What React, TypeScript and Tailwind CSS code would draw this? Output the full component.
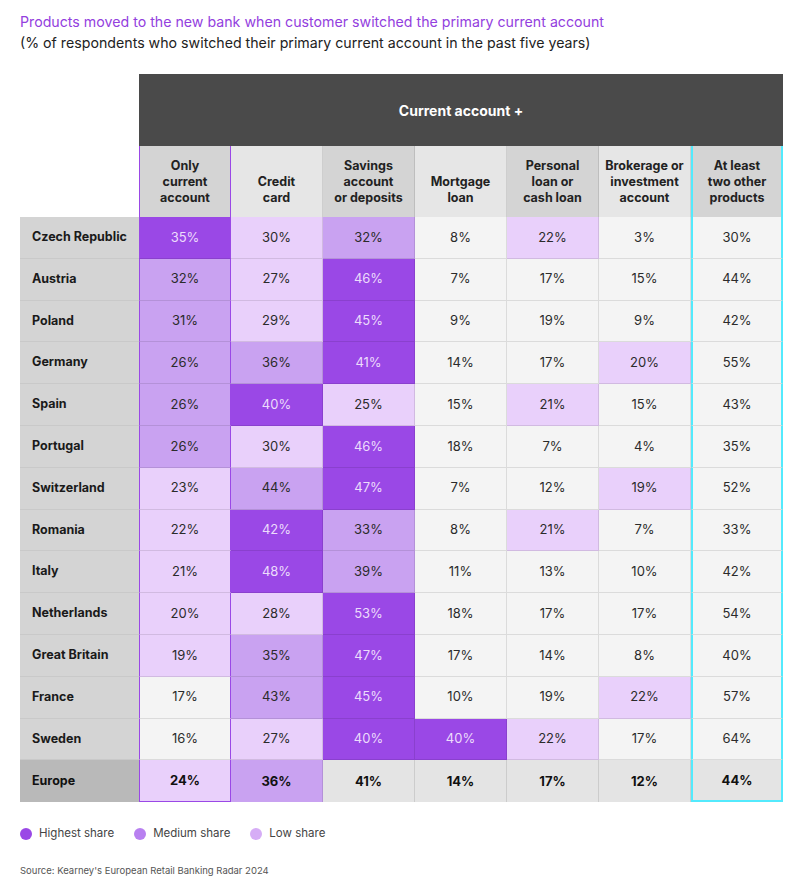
import React from 'react';

type Level = 'H' | 'M' | 'L' | 'N';

interface Row {
    country: string;
    values: [number, Level][];
}

const columns = [
    ['Only', 'current', 'account'],
    ['Credit', 'card'],
    ['Savings', 'account', 'or deposits'],
    ['Mortgage', 'loan'],
    ['Personal', 'loan or', 'cash loan'],
    ['Brokerage or', 'investment', 'account'],
    ['At least', 'two other', 'products'],
];

const rows: Row[] = [
    { country: 'Czech Republic', values: [[35, 'H'], [30, 'L'], [32, 'M'], [8, 'N'], [22, 'L'], [3, 'N'], [30, 'N']] },
    { country: 'Austria', values: [[32, 'M'], [27, 'L'], [46, 'H'], [7, 'N'], [17, 'N'], [15, 'N'], [44, 'N']] },
    { country: 'Poland', values: [[31, 'M'], [29, 'L'], [45, 'H'], [9, 'N'], [19, 'N'], [9, 'N'], [42, 'N']] },
    { country: 'Germany', values: [[26, 'M'], [36, 'M'], [41, 'H'], [14, 'N'], [17, 'N'], [20, 'L'], [55, 'N']] },
    { country: 'Spain', values: [[26, 'M'], [40, 'H'], [25, 'L'], [15, 'N'], [21, 'L'], [15, 'N'], [43, 'N']] },
    { country: 'Portugal', values: [[26, 'M'], [30, 'L'], [46, 'H'], [18, 'N'], [7, 'N'], [4, 'N'], [35, 'N']] },
    { country: 'Switzerland', values: [[23, 'L'], [44, 'M'], [47, 'H'], [7, 'N'], [12, 'N'], [19, 'L'], [52, 'N']] },
    { country: 'Romania', values: [[22, 'L'], [42, 'H'], [33, 'M'], [8, 'N'], [21, 'L'], [7, 'N'], [33, 'N']] },
    { country: 'Italy', values: [[21, 'L'], [48, 'H'], [39, 'M'], [11, 'N'], [13, 'N'], [10, 'N'], [42, 'N']] },
    { country: 'Netherlands', values: [[20, 'L'], [28, 'L'], [53, 'H'], [18, 'N'], [17, 'N'], [17, 'N'], [54, 'N']] },
    { country: 'Great Britain', values: [[19, 'L'], [35, 'M'], [47, 'H'], [17, 'N'], [14, 'N'], [8, 'N'], [40, 'N']] },
    { country: 'France', values: [[17, 'N'], [43, 'M'], [45, 'H'], [10, 'N'], [19, 'N'], [22, 'L'], [57, 'N']] },
    { country: 'Sweden', values: [[16, 'N'], [27, 'L'], [40, 'H'], [40, 'H'], [22, 'L'], [17, 'N'], [64, 'N']] },
];

const europe: [number, Level][] = [[24, 'L'], [36, 'M'], [41, 'N'], [14, 'N'], [17, 'N'], [12, 'N'], [44, 'N']];

const levelBg: Record<Level, string> = {
    H: 'bg-[#9a48e6] text-[#ecdcfc]',
    M: 'bg-[#c9a2f1] text-[#2b2b2b]',
    L: 'bg-[#e9d0fb] text-[#2b2b2b]',
    N: 'bg-[#f4f4f4] text-[#2b2b2b]',
};

// outline for the first (purple) and last (teal) column
function colEdge(i: number, last: boolean) {
    if (i === 0) {
        return last
            ? 'border-l-[1.5px] border-r-[1.5px] border-b-[1.5px] border-[#9a48e6]'
            : 'border-l-[1.5px] border-r-[1.5px] border-[#9a48e6]';
    }
    if (i === 6) {
        return last
            ? 'border-l-2 border-r-2 border-b-2 border-cyan-300'
            : 'border-l-2 border-r-2 border-cyan-300';
    }
    return 'border-r border-r-black/10';
}

export default function App() {
    return (
        <div className="w-[800px] h-[884px] bg-white px-5 pt-[11px] font-['Inter',sans-serif] text-[#2b2b2b]">
            <h1 className="text-[14.2px] leading-[21px] text-[#9340de]">
                Products moved to the new bank when customer switched the primary current account
            </h1>
            <p className="text-[14.2px] leading-[21px] text-[#222]">
                (% of respondents who switched their primary current account in the past five years)
            </p>

            <div className="mt-[21px] grid grid-cols-[119px_repeat(7,92px)]">
                <div className="row-span-2" />
                <div className="col-span-7 h-[72px] bg-[#4a4a4a] flex items-center justify-center text-white font-bold text-[14px]">
                    Current account +
                </div>

                {columns.map((lines, i) => (
                    <div
                        key={i}
                        className={`h-[71px] flex flex-col items-center justify-end pb-[11px] text-[12.5px] leading-[16px] font-bold text-[#222] text-center ${
                            i % 2 === 0 ? 'bg-[#d4d4d4]' : 'bg-[#e6e6e6]'
                        } ${colEdge(i, false)}`}
                    >
                        {lines.map((l) => (
                            <span key={l}>{l}</span>
                        ))}
                    </div>
                ))}

                {rows.map((row) => (
                    <React.Fragment key={row.country}>
                        <div className="h-[41.8px] bg-[#d4d4d4] border-b border-b-black/5 flex items-center pl-3 text-[12.5px] font-bold text-[#1a1a1a]">
                            {row.country}
                        </div>
                        {row.values.map(([v, lvl], i) => (
                            <div
                                key={i}
                                className={`h-[41.8px] flex items-center justify-center text-[13px] ${colEdge(i, false)} border-b border-b-black/10 ${levelBg[lvl]}`}
                            >
                                {v}%
                            </div>
                        ))}
                    </React.Fragment>
                ))}

                <div className="h-[41.8px] bg-[#b9b9b9] flex items-center pl-3 text-[12.5px] font-bold text-[#111]">
                    Europe
                </div>
                {europe.map(([v, lvl], i) => (
                    <div
                        key={i}
                        className={`h-[41.8px] flex items-center justify-center text-[13px] font-bold text-[#111] ${
                            lvl === 'N' ? 'bg-[#e4e4e4]' : levelBg[lvl]
                        } ${colEdge(i, true)}`}
                    >
                        {v}%
                    </div>
                ))}
            </div>

            <div className="mt-[23px] flex items-center gap-[20px] text-[11.5px] text-[#444]">
                <div className="flex items-center gap-[7px]">
                    <span className="w-3 h-3 rounded-full bg-[#9a48e6]" />
                    Highest share
                </div>
                <div className="flex items-center gap-[7px]">
                    <span className="w-3 h-3 rounded-full bg-[#b880f0]" />
                    Medium share
                </div>
                <div className="flex items-center gap-[7px]">
                    <span className="w-3 h-3 rounded-full bg-[#d6adf6]" />
                    Low share
                </div>
            </div>

            <p className="mt-[22px] text-[9.5px] text-[#555]">Source: Kearney's European Retail Banking Radar 2024</p>
        </div>
    );
}
